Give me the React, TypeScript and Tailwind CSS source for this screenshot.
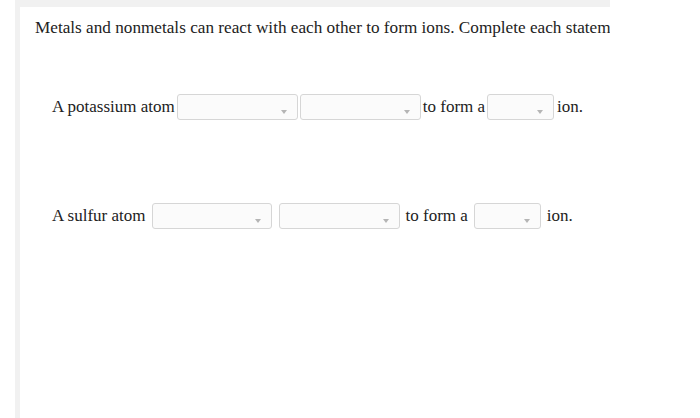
import React from 'react';

function Drop({ w }: { w: string }) {
  return (
    <div className={`relative inline-flex h-[26px] ${w} rounded-[3px] border border-[#d6d6d6] bg-[#fbfbfb] align-middle`}>
      <svg className="absolute right-[10px] top-[15px]" width="6" height="4" viewBox="0 0 6 4">
        <path d="M0 0 L6 0 L3 4 Z" fill="#b5b5b5" />
      </svg>
    </div>
  );
}

export default function App() {
  return (
    <div className="h-[418px] w-[700px] bg-white font-['Liberation_Serif',serif] text-[#222]">
      <div className="h-full w-[610px] pl-[15px]">
        <div className="h-[7px] bg-[#f1f1f1]" />
        <div className="h-[411px] overflow-hidden border-l-[5px] border-[#f1f1f1] bg-white">
          <p className="whitespace-nowrap pl-[15px] pt-[10px] text-[17.2px] leading-[21px]">
            Metals and nonmetals can react with each other to form ions. Complete each statement below.
          </p>

          <div className="mt-[55px] flex items-center pl-[32px] text-[17px]">
            <span>A potassium atom</span>
            <div className="ml-[2px]"><Drop w="w-[121px]" /></div>
            <div className="ml-[2px]"><Drop w="w-[121px]" /></div>
            <span className="ml-[2px]">to form a</span>
            <div className="ml-[2px]"><Drop w="w-[67px]" /></div>
            <span className="ml-[3px]">ion.</span>
          </div>

          <div className="mt-[82px] flex items-center pl-[32px] text-[17px]">
            <span>A sulfur atom</span>
            <div className="ml-[6px]"><Drop w="w-[120px]" /></div>
            <div className="ml-[7px]"><Drop w="w-[121px]" /></div>
            <span className="ml-[6px]">to form a</span>
            <div className="ml-[6px]"><Drop w="w-[67px]" /></div>
            <span className="ml-[6px]">ion.</span>
          </div>
        </div>
      </div>
    </div>
  );
}
